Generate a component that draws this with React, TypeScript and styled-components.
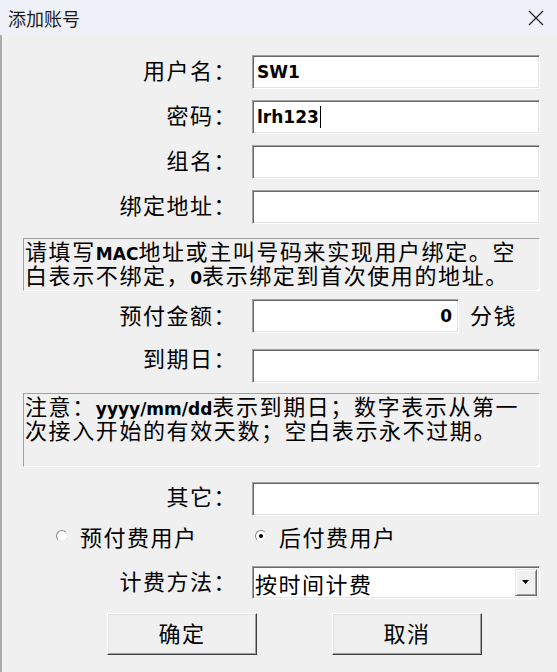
import React from 'react';
import styled, { createGlobalStyle } from 'styled-components';

const GlobalStyle = createGlobalStyle`
  html, body { margin: 0; padding: 0; background: #f0f0f0; }
  body { font-family: "Noto Sans CJK SC", "Noto Sans", sans-serif; color: #000; }
`;

const Window = styled.div`
  width: 557px;
  height: 672px;
  display: flex;
  flex-direction: column;
  background: #f0f0f0;
  overflow: hidden;
`;

const TitleBar = styled.div`
  height: 35px;
  flex: none;
  display: flex;
  align-items: center;
  justify-content: space-between;
  background: #eff1f8;
  padding: 0 13px 0 8px;
  font-size: 18px;
  color: #1a1a1a;
`;

const Body = styled.div`
  flex: 1;
  border-left: 2px solid #ababab;
  display: flex;
  flex-direction: column;
  padding: 20px 17px 0 21px;
`;

const Row = styled.div<{ $mt: number; $h: number }>`
  display: flex;
  align-items: center;
  margin-top: ${p => p.$mt}px;
  height: ${p => p.$h}px;
`;

const Label = styled.div<{ $up?: number }>`
  width: 214px;
  margin-right: 15px;
  margin-bottom: ${p => (p.$up ?? 3) * 2}px;
  flex: none;
  text-align: right;
  font-size: 22px;
  letter-spacing: 1.5px;
  line-height: 24px;
  white-space: nowrap;
`;

const Field = styled.div<{ $w?: number; $right?: boolean }>`
  width: ${p => p.$w ?? 288}px;
  height: 100%;
  box-sizing: border-box;
  flex: none;
  background: #fff;
  border: 1px solid;
  border-color: #a0a0a0 #ffffff #ffffff #a0a0a0;
  box-shadow: inset 1px 1px 0 #696969, inset -1px -1px 0 #e3e3e3;
  display: flex;
  align-items: center;
  justify-content: ${p => (p.$right ? 'flex-end' : 'flex-start')};
  padding: ${p => (p.$right ? '0 6px 0 0' : '0 0 0 4px')};
  font-family: "DejaVu Sans", Verdana, sans-serif;
  font-weight: bold;
  font-size: 17px;
`;

const Caret = styled.span`
  display: inline-block;
  width: 1px;
  height: 22px;
  background: #000;
  margin-left: 1px;
`;

const Unit = styled.div`
  margin-left: 11px;
  margin-bottom: 4px;
  font-size: 22px;
  letter-spacing: 1.5px;
`;

const InfoBox = styled.div<{ $mt: number; $h: number }>`
  margin-top: ${p => p.$mt}px;
  height: ${p => p.$h}px;
  box-sizing: border-box;
  border: 1px solid;
  border-color: #a0a0a0 #ffffff #ffffff #a0a0a0;
  padding: 0 1px;
  overflow: hidden;
`;

const InfoLine = styled.div`
  height: 24px;
  line-height: 22px;
  font-size: 22px;
  letter-spacing: 1.6px;
  white-space: nowrap;
`;

const Latin = styled.b`
  font-family: "DejaVu Sans", Verdana, sans-serif;
  font-size: 17px;
  letter-spacing: 0;
`;

const RadioRow = styled.div`
  display: flex;
  align-items: center;
  margin-top: 10px;
  height: 20px;
  padding-left: 33px;
`;

const RadioItem = styled.label<{ $w?: number }>`
  display: flex;
  align-items: center;
  width: ${p => (p.$w ? `${p.$w}px` : 'auto')};
  font-size: 22px;
  letter-spacing: 1.5px;
`;

const RadioCircle = styled.span<{ $checked?: boolean }>`
  width: 12px;
  height: 12px;
  box-sizing: border-box;
  border-radius: 50%;
  border: 1px solid;
  border-color: #8a8a8a #e8e8e8 #e8e8e8 #8a8a8a;
  background: #fff;
  margin-right: 12px;
  display: flex;
  align-items: center;
  justify-content: center;
  &::after {
    content: '';
    width: 4px;
    height: 4px;
    border-radius: 50%;
    background: ${p => (p.$checked ? '#000' : 'transparent')};
  }
`;

const Combo = styled(Field)`
  font-family: "Noto Sans CJK SC", sans-serif;
  font-weight: normal;
  font-size: 22px;
  letter-spacing: 1.5px;
  padding: 0 2px 0 2px;
  justify-content: space-between;
`;

const DropButton = styled.div`
  width: 22px;
  height: 27px;
  box-sizing: border-box;
  background: #f0f0f0;
  border: 1px solid;
  border-color: #e3e3e3 #696969 #696969 #e3e3e3;
  box-shadow: inset 1px 1px 0 #fff, inset -1px -1px 0 #a0a0a0;
  display: flex;
  align-items: center;
  justify-content: center;
`;

const ButtonRow = styled.div`
  display: flex;
  margin-top: 14px;
  padding-left: 84px;
  gap: 75px;
`;

const PushButton = styled.button`
  width: 150px;
  height: 42px;
  box-sizing: border-box;
  background: #f0f0f0;
  border: 1px solid;
  border-color: #ffffff #404040 #404040 #ffffff;
  box-shadow: inset -1px -1px 0 #a0a0a0, inset 1px 1px 0 #e3e3e3;
  font-family: "Noto Sans CJK SC", sans-serif;
  font-size: 22px;
  letter-spacing: 1.5px;
  color: #000;
  padding: 0 0 5px 0;
`;

function CloseIcon() {
  return (
    <svg width="16" height="16" viewBox="0 0 16 16">
      <path d="M1 1 L15 15 M15 1 L1 15" stroke="#1f1f1f" strokeWidth="1.2" fill="none" />
    </svg>
  );
}

function DownArrow() {
  return (
    <svg width="8" height="5" viewBox="0 0 8 5">
      <path d="M0 0 H7 L3.5 4 Z" fill="#000" />
    </svg>
  );
}

export default function App() {
  return (
    <>
      <GlobalStyle />
      <Window>
        <TitleBar>
          <span>添加账号</span>
          <CloseIcon />
        </TitleBar>
        <Body>
          <Row $mt={0} $h={34}>
            <Label>用户名：</Label>
            <Field>SW1</Field>
          </Row>
          <Row $mt={11} $h={34}>
            <Label>密码：</Label>
            <Field>
              lrh123
              <Caret />
            </Field>
          </Row>
          <Row $mt={11} $h={34}>
            <Label>组名：</Label>
            <Field />
          </Row>
          <Row $mt={11} $h={34}>
            <Label>绑定地址：</Label>
            <Field />
          </Row>
          <InfoBox $mt={14} $h={53}>
            <InfoLine>
              请填写<Latin>MAC</Latin>地址或主叫号码来实现用户绑定。空
            </InfoLine>
            <InfoLine>
              白表示不绑定，<Latin>0</Latin>表示绑定到首次使用的地址。
            </InfoLine>
          </InfoBox>
          <Row $mt={8} $h={34}>
            <Label $up={2}>预付金额：</Label>
            <Field $w={207} $right>
              0
            </Field>
            <Unit>分钱</Unit>
          </Row>
          <Row $mt={16} $h={34}>
            <Label $up={9}>到期日：</Label>
            <Field />
          </Row>
          <InfoBox $mt={10} $h={74}>
            <InfoLine>
              注意：<Latin>yyyy/mm/dd</Latin>表示到期日；数字表示从第一
            </InfoLine>
            <InfoLine>次接入开始的有效天数；空白表示永不过期。</InfoLine>
          </InfoBox>
          <Row $mt={15} $h={34}>
            <Label $up={4}>其它：</Label>
            <Field />
          </Row>
          <RadioRow>
            <RadioItem $w={199}>
              <RadioCircle />
              预付费用户
            </RadioItem>
            <RadioItem>
              <RadioCircle $checked />
              后付费用户
            </RadioItem>
          </RadioRow>
          <Row $mt={20} $h={33}>
            <Label>计费方法：</Label>
            <Combo>
              <span>按时间计费</span>
              <DropButton>
                <DownArrow />
              </DropButton>
            </Combo>
          </Row>
          <ButtonRow>
            <PushButton>确定</PushButton>
            <PushButton>取消</PushButton>
          </ButtonRow>
        </Body>
      </Window>
    </>
  );
}
